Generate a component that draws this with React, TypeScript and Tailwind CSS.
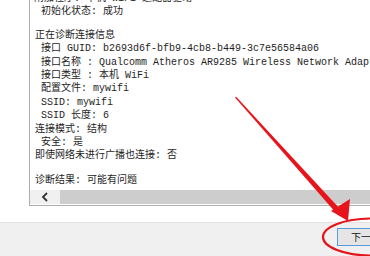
export default function App() {
  const mono = "font-['Liberation_Mono','Noto_Sans_CJK_SC',monospace]";

  const lines: { text: string; indent: "h" | "s" | "t"; gap?: string }[] = [
    { text: "附加程序: 本机 WiFi 适配器驱动", indent: "t" },
    { text: "初始化状态: 成功", indent: "s" },
    { text: "正在诊断连接信息", indent: "h", gap: "mt-[10px]" },
    { text: "接口 GUID: b2693d6f-bfb9-4cb8-b449-3c7e56584a06", indent: "s" },
    { text: "接口名称 : Qualcomm Atheros AR9285 Wireless Network Adapter", indent: "s" },
    { text: "接口类型 : 本机 WiFi", indent: "s" },
    { text: "配置文件: mywifi", indent: "s" },
    { text: "SSID: mywifi", indent: "s" },
    { text: "SSID 长度: 6", indent: "s" },
    { text: "连接模式: 结构", indent: "h" },
    { text: "安全: 是", indent: "s" },
    { text: "即使网络未进行广播也连接: 否", indent: "h" },
    { text: "诊断结果: 可能有问题", indent: "h", gap: "mt-[11px]" },
  ];

  return (
    <div className="relative w-[370px] h-[256px] overflow-hidden bg-white flex flex-col">
      {/* report box */}
      <div className="h-[222px] pl-[29px] bg-white">
        <div className="h-[206px] w-[400px] border-l border-b border-[#adadad] bg-white flex flex-col overflow-hidden">
          <div className={`flex-1 overflow-hidden ${mono} text-[10px] leading-[13.4px] text-[#1e1e1e] whitespace-pre`}>
            <div className="-mt-[8px]">
              {lines.map((l, i) => (
                <div
                  key={i}
                  className={`${l.indent === "h" ? "pl-[5px]" : l.indent === "t" ? "pl-[4px]" : "pl-[11px]"} ${l.gap ?? ""}`}
                >
                  {l.text}
                </div>
              ))}
            </div>
          </div>
          <div className="h-[14px] flex mb-px">
            <div className="w-[30px] bg-[#f0f0f0] flex items-center justify-center text-[#333]">
              <svg width="8" height="10" viewBox="0 0 8 10">
                <path d="M6 1 L2 5 L6 9" fill="none" stroke="#333" strokeWidth="1.8" />
              </svg>
            </div>
            <div className="flex-1 bg-[#cdcdcd]" />
          </div>
        </div>
      </div>

      {/* footer */}
      <div className="flex-1 bg-[#f0f0f0] border-t border-[#e3e3e3] flex justify-start pl-[337px] pt-[5px]">
        <button className="h-[18px] w-[80px] shrink-0 border border-[#5a9be0] bg-[#e5e5e5] text-left pl-[13px] text-[10px] leading-[16px] text-[#111] font-['Noto_Sans_CJK_SC',sans-serif]">
          下一步(N)
        </button>
      </div>

      {/* annotation */}
      <svg className="absolute inset-0 pointer-events-none" width="370" height="256" viewBox="0 0 370 256">
        <polygon points="235,97.5 236.2,96.8 341,210 336.5,213.5" fill="#e8141b" />
        <polygon points="348,221 331,211 350,199" fill="#e8141b" />
        <ellipse cx="371" cy="237" rx="48" ry="18.5" fill="none" stroke="#e3141b" strokeWidth="2.2" />
      </svg>
    </div>
  );
}
